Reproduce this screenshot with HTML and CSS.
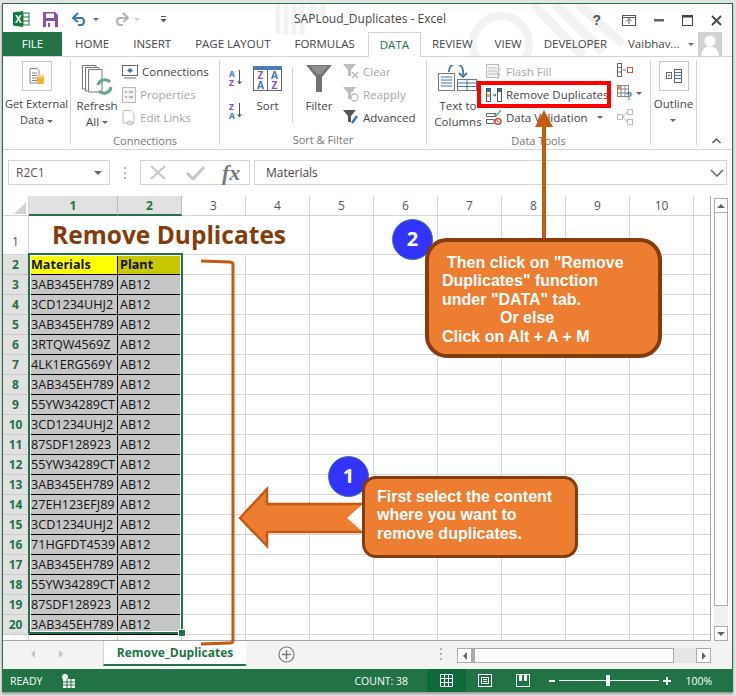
FILE: index.html
```html
<!DOCTYPE html>
<html lang="en">
<head>
    <meta charset="UTF-8">
    <title>SAPLoud_Duplicates - Excel</title>
    <link rel="stylesheet" href="styles.css">
</head>
<body>
<div class="window">
    <div class="titlebar">
        <svg class="watermark" width="730" height="52" viewBox="0 0 730 52">
            <g fill="none" stroke="#f2f2f2">
                <path d="M275 0V30M283 0V30M291 0V30M299 0V30M310 0V14M320 0V14" stroke-width="5"/>
                <circle cx="498" cy="40" r="28" stroke-width="8"/>
                <path d="M530 0L580 52M552 0L600 48M575 0L620 40" stroke-width="9"/>
            </g>
        </svg>
        <div class="quick">
            <svg class="qa xl" width="17" height="16" viewBox="0 0 17 16"><rect x="7" y="2" width="9" height="12" fill="#fff" stroke="#217346"/><path d="M10 2V14M7 6H16M7 10H16" stroke="#217346"/><path d="M0 1.500L10 0V16L0 14.500Z" fill="#107c41"/><text x="2" y="12" class="xl-x">X</text></svg>
            <svg class="qa save" width="15" height="15" viewBox="0 0 15 15"><path d="M0 0H12L15 3V15H0Z" fill="#8a4fa8"/><rect x="3" y="1.500" width="8" height="4.500" fill="#fff"/><rect x="3" y="9" width="9" height="6" fill="#fff"/><rect x="5" y="11" width="2" height="4" fill="#8a4fa8"/></svg>
            <svg class="qa undo" width="16" height="14" viewBox="0 0 16 14"><path d="M2 6H10A4 4 0 0 1 10 13H6" fill="none" stroke="#3c78b4" stroke-width="2.200"/><path d="M6 1L1 6L6 10" fill="none" stroke="#3c78b4" stroke-width="2.200"/></svg>
            <span class="caret qa-caret"></span>
            <svg class="qa redo" width="16" height="14" viewBox="0 0 16 14"><path d="M14 6H6A4 4 0 0 0 6 13H10" fill="none" stroke="#b4b4b4" stroke-width="2.200"/><path d="M10 1L15 6L10 10" fill="none" stroke="#b4b4b4" stroke-width="2.200"/></svg>
            <span class="caret qa-caret light"></span>
            <svg class="qa more" width="7" height="7" viewBox="0 0 7 7"><path d="M1 .500H6" stroke="#555"/><path d="M.500 3H6.500L3.500 6.500Z" fill="#555"/></svg>
        </div>
        <div class="doc-title">SAPLoud_Duplicates - Excel</div>
        <div class="controls">
            <span class="help">?</span>
            <svg width="14" height="11" viewBox="0 0 14 11"><rect x=".500" y=".500" width="13" height="10" fill="none" stroke="#555"/><path d="M.500 2.500H13.500" stroke="#555"/><path d="M7 9V4M4.500 6L7 3.500L9.500 6" fill="none" stroke="#555"/></svg>
            <svg width="10" height="3" viewBox="0 0 10 3"><rect width="10" height="2.500" fill="#666"/></svg>
            <svg width="11" height="11" viewBox="0 0 11 11"><rect x=".500" y=".500" width="10" height="10" fill="none" stroke="#444"/><rect width="11" height="2.500" fill="#444"/></svg>
            <svg width="11" height="11" viewBox="0 0 11 11"><path d="M1 1L10 10M10 1L1 10" stroke="#444" stroke-width="1.800"/></svg>
        </div>
    </div>

    <div class="tabs">
        <div class="tab file">FILE</div>
        <div class="tab home">HOME</div>
        <div class="tab">INSERT</div>
        <div class="tab">PAGE LAYOUT</div>
        <div class="tab">FORMULAS</div>
        <div class="tab active">DATA</div>
        <div class="tab after">REVIEW</div>
        <div class="tab after">VIEW</div>
        <div class="tab after">DEVELOPER</div>
        <div class="user">Vaibhav... <span class="caret"></span></div>
        <svg class="avatar" width="24" height="24" viewBox="0 0 24 24"><rect width="24" height="24" fill="#d2d2d2"/><circle cx="12" cy="9" r="5.500" fill="#fff"/><path d="M3 24C4 16 8 14.500 12 14.500S20 16 21 24Z" fill="#fff"/></svg>
    </div>

    <div class="ribbon">
        <div class="group g-external">
            <div class="big">
                <div class="icon-box">
                    <svg width="16" height="17" viewBox="0 0 16 17"><path d="M1 .500H8L10 2.500V15H1Z" fill="#fff" stroke="#888"/><path d="M3 5H8M3 7.500H8M3 10H8M3 12.500H8" stroke="#888"/><rect x="8" y="7" width="7" height="9" rx="2" fill="#f2b233"/><ellipse cx="11.500" cy="8" rx="3.500" ry="1.500" fill="#f8d88a"/></svg>
                </div>
                <div class="big-label">Get External<br>Data <span class="caret"></span></div>
            </div>
        </div>

        <div class="group g-connections">
            <div class="group-body">
                <div class="big refresh">
                    <svg width="31" height="31" viewBox="0 0 31 31"><g fill="#fff" stroke="#777"><path d="M.500 .500H14V24H.500Z"/><path d="M3.500 2.500H17V26H3.500Z"/><path d="M6.500 4.500H20V27H6.500Z"/></g><path d="M16 20A7 7 0 0 1 28 17M29 22A7 7 0 0 1 17 26" fill="none" stroke="#5fa88a" stroke-width="3"/></svg>
                    <div class="big-label">Refresh<br>All <span class="caret"></span></div>
                </div>
                <ul class="rows">
                    <li><svg width="16" height="14" viewBox="0 0 16 14"><rect x=".500" y=".500" width="15" height="10" fill="#fff" stroke="#666"/><path d="M8 3L11 5.500L8 8L5 5.500Z" fill="#3c78b4"/><path d="M2 13H14" stroke="#666"/></svg>Connections</li>
                    <li class="off"><svg width="14" height="16" viewBox="0 0 14 16"><rect x=".500" y=".500" width="13" height="15" fill="#f4f2f4" stroke="#bbb"/><path d="M3 5H5M7 5H11M3 10H5M7 10H11" stroke="#a9a0a9" stroke-width="1.500"/></svg>Properties</li>
                    <li class="off"><svg width="14" height="16" viewBox="0 0 14 16"><path d="M1 .500H9L12 3.500V13H1Z" fill="#fff" stroke="#bbb"/><ellipse cx="8" cy="13" rx="3" ry="2" fill="none" stroke="#bbb"/></svg>Edit Links</li>
                </ul>
            </div>
            <div class="group-label">Connections</div>
        </div>

        <div class="group g-sort">
            <div class="group-body">
                <div class="sort-arrows">
                    <div class="az"><span class="az-text"><i class="blue">A</i><i class="purple">Z</i></span><svg width="5" height="15" viewBox="0 0 5 15"><path d="M2.500 0V14M.500 11L2.500 14L4.500 11" fill="none" stroke="#555"/></svg></div>
                    <div class="az"><span class="az-text"><i class="purple">Z</i><i class="blue">A</i></span><svg width="5" height="15" viewBox="0 0 5 15"><path d="M2.500 0V14M.500 11L2.500 14L4.500 11" fill="none" stroke="#555"/></svg></div>
                </div>
                <div class="big sort">
                    <div class="za-icon">
                        <span><i class="purple">Z</i><i class="blue">A</i></span>
                        <span><i class="blue">A</i><i class="purple">Z</i></span>
                    </div>
                    <div class="big-label">Sort</div>
                </div>
                <div class="thin-sep"></div>
                <div class="big filter">
                    <svg width="26" height="27" viewBox="0 0 26 27"><path d="M0 0H26L16 12V27H10V12Z" fill="#737373"/><path d="M4 1H22L15 9H11Z" fill="#8f8f8f"/></svg>
                    <div class="big-label">Filter</div>
                </div>
                <ul class="rows filter-rows">
                    <li class="off"><svg width="16" height="15" viewBox="0 0 16 15"><path d="M0 0H13L8 6V12H5V6Z" fill="#bdbdbd"/><path d="M9 8L15 14M15 8L9 14" stroke="#bdbdbd" stroke-width="1.500"/></svg>Clear</li>
                    <li class="off"><svg width="16" height="15" viewBox="0 0 16 15"><path d="M0 0H13L8 6V12H5V6Z" fill="#bdbdbd"/><circle cx="11.500" cy="10.500" r="3.500" fill="none" stroke="#bdbdbd" stroke-width="1.300"/></svg>Reapply</li>
                    <li><svg width="16" height="15" viewBox="0 0 16 15"><path d="M0 0H13L8 6V12H5V6Z" fill="#555"/><path d="M9 13L14 6" stroke="#3c78b4" stroke-width="2.500"/></svg>Advanced</li>
                </ul>
            </div>
            <div class="group-label">Sort &amp; Filter</div>
        </div>

        <div class="group g-tools">
            <div class="group-body">
                <div class="big columns">
                    <svg width="40" height="26" viewBox="0 0 40 26"><rect x=".500" y="8.500" width="16" height="17" fill="#fff" stroke="#777"/><path d="M3 12H14M3 15H14M3 18H14M3 21H14" stroke="#3c78b4"/><rect x="19.500" y="14.500" width="19" height="11" fill="#fff" stroke="#777"/><path d="M19.500 18H38.500M19.500 21.500H38.500M29 14.500V25.500" stroke="#3c78b4"/><path d="M11 7A7 7 0 0 1 25 5V10" fill="none" stroke="#3c78b4" stroke-width="1.800"/><path d="M21 8L25 12L29 8" fill="none" stroke="#3c78b4" stroke-width="1.800"/></svg>
                    <div class="big-label">Text to<br>Columns</div>
                </div>
                <ul class="rows tool-rows">
                    <li class="off"><svg width="16" height="15" viewBox="0 0 16 15"><rect x=".500" y=".500" width="12" height="13" fill="#f4f4f4" stroke="#bbb"/><path d="M2 4H11M2 7H11M2 10H11" stroke="#bbb"/><path d="M15 4L11 10H14L12 15" fill="none" stroke="#bbb"/></svg>Flash Fill</li>
                    <li><svg width="16" height="14" viewBox="0 0 16 14"><rect x=".500" y=".500" width="4" height="13" fill="#fff" stroke="#555"/><rect x="1" y="1" width="3" height="3" fill="#2f6fb0"/><rect x="1" y="6" width="3" height="3" fill="#e2b04a"/><rect x="11.500" y=".500" width="4" height="13" fill="#fff" stroke="#555"/><rect x="12" y="1" width="3" height="3" fill="#2f6fb0"/><path d="M6.500 7H9.500" stroke="#3c78b4"/><path d="M8.500 5.500L10 7L8.500 8.500" fill="none" stroke="#3c78b4"/></svg>Remove Duplicates</li>
                    <li><svg width="16" height="15" viewBox="0 0 16 15"><path d="M.500 3.500H10M.500 6.500H10V3.500M.500 3.500V6.500M.500 9.500H8V13.500H.500Z" fill="none" stroke="#666"/><path d="M8 4L10 6L15 0" fill="none" stroke="#5fa88a" stroke-width="1.300"/><circle cx="12" cy="11.500" r="3" fill="#fff" stroke="#d8402a" stroke-width="1.300"/><path d="M10 9.500L14 13.500" stroke="#d8402a"/></svg>Data Validation <span class="caret dv-caret"></span></li>
                </ul>
                <div class="tool-icons">
                    <svg width="16" height="14" viewBox="0 0 16 14"><rect x=".500" y=".500" width="4" height="13" fill="#fff" stroke="#666"/><path d="M.500 4.500H4.500M.500 9H4.500" stroke="#666"/><path d="M6 7H9" stroke="#3c78b4"/><rect x="10.500" y="4.500" width="5" height="5" fill="#fff" stroke="#e0562a"/></svg>
                    <div class="what-if"><svg width="16" height="16" viewBox="0 0 16 16"><rect x=".500" y=".500" width="11" height="11" fill="#fff" stroke="#888"/><path d="M.500 4H11.500M.500 8H11.500M4 .500V11.500M8 .500V11.500" stroke="#888"/><rect x="1" y="1" width="3" height="3" fill="#e78b3a"/><text x="9" y="15" class="q-mark">?</text></svg><span class="caret"></span></div>
                    <svg width="16" height="16" viewBox="0 0 16 16"><g fill="#fff" stroke="#bbb"><rect x=".500" y="5.500" width="5" height="5"/><rect x="10.500" y=".500" width="5" height="5"/><rect x="10.500" y="10.500" width="5" height="5"/></g><path d="M6 8L10 3M6 8L10 13" stroke="#bbb"/></svg>
                </div>
            </div>
            <div class="group-label">Data Tools</div>
        </div>

        <div class="group g-outline">
            <div class="big">
                <div class="icon-box">
                    <svg width="16" height="14" viewBox="0 0 16 14"><rect x=".500" y="3.500" width="5" height="6" fill="#fff" stroke="#666"/><path d="M2 6.500H4M3 5.500V7.500" stroke="#666"/><rect x="8.500" y=".500" width="7" height="13" fill="#fff" stroke="#666"/><path d="M8.500 3.500H15.500M8.500 6.500H15.500M8.500 9.500H15.500" stroke="#3c78b4"/></svg>
                </div>
                <div class="big-label">Outline<br><span class="caret"></span></div>
            </div>
        </div>
        <svg class="collapse" width="9" height="6" viewBox="0 0 9 6"><path d="M.500 5L4.500 1L8.500 5" fill="none" stroke="#555" stroke-width="1.500"/></svg>
    </div>

    <div class="formula-bar">
        <div class="name-box">R2C1<span class="caret"></span></div>
        <div class="grip"></div>
        <div class="fx-box">
            <svg width="16" height="15" viewBox="0 0 16 15"><path d="M1 1L15 14M15 1L1 14" stroke="#c6c6c6" stroke-width="2"/></svg>
            <svg width="19" height="15" viewBox="0 0 19 15"><path d="M1 8L7 14L18 2" fill="none" stroke="#c6c6c6" stroke-width="3"/></svg>
            <span class="fx">fx</span>
        </div>
        <div class="formula-input">Materials
            <svg width="14" height="8" viewBox="0 0 14 8"><path d="M1 1L7 7L13 1" fill="none" stroke="#666" stroke-width="1.500"/></svg>
        </div>
    </div>

    <div class="sheet">
        <div class="grid-wrap">
            <table class="grid" id="grid"></table>
            <div class="selection"><span class="handle"></span></div>
        </div>
        <div class="vscroll">
            <div class="sb-btn"><span class="tri up"></span></div>
            <div class="vthumb"></div>
            <div class="vtrack"></div>
            <div class="sb-btn"><span class="tri down"></span></div>
        </div>
    </div>

    <div class="sheet-tabs">
        <div class="nav-arrows"><span class="tri left pale"></span><span class="tri right pale"></span></div>
        <div class="sheet-tab">Remove_Duplicates</div>
        <svg class="add-sheet" width="17" height="17" viewBox="0 0 17 17"><circle cx="8.500" cy="8.500" r="7.500" fill="#fff" stroke="#777" stroke-width="1.200"/><path d="M4 8.500H13M8.500 4V13" stroke="#777" stroke-width="1.500"/></svg>
        <div class="grip tabs-grip"></div>
        <div class="hscroll">
            <div class="sb-btn"><span class="tri left"></span></div>
            <div class="hthumb"></div>
            <div class="htrack"></div>
            <div class="sb-btn"><span class="tri right"></span></div>
        </div>
    </div>

    <div class="statusbar">
        <span class="ready">READY</span>
        <svg class="macro" width="13" height="14" viewBox="0 0 13 14"><circle cx="3" cy="3" r="3" fill="#fff"/><rect x="1" y="5" width="12" height="9" fill="#fff"/><path d="M1 8H13M1 11H13M5 5V14M9 5V14" stroke="#217346"/></svg>
        <span class="count">COUNT: 38</span>
        <div class="views">
            <div class="view on"><svg width="13" height="13" viewBox="0 0 13 13"><path d="M.500 .500H12.500V12.500H.500ZM.500 4.500H12.500M.500 8.500H12.500M4.500 .500V12.500M8.500 .500V12.500" fill="none" stroke="#fff"/></svg></div>
            <div class="view"><svg width="14" height="13" viewBox="0 0 14 13"><rect x=".500" y=".500" width="13" height="12" fill="none" stroke="#fff"/><path d="M3.500 3.500H10.500V9.500H3.500ZM5 5.500H9M5 7.500H9" fill="none" stroke="#fff"/></svg></div>
            <div class="view"><svg width="14" height="13" viewBox="0 0 14 13"><rect x=".500" y=".500" width="13" height="12" fill="none" stroke="#fff"/><path d="M3 0H6V7H3ZM8 0H11V7H8Z" fill="#fff"/></svg></div>
        </div>
        <div class="zoom">
            <span class="zoom-minus"></span>
            <div class="slider"><span class="slider-thumb"></span></div>
            <svg width="8" height="8" viewBox="0 0 8 8"><path d="M0 4H8M4 0V8" stroke="#fff" stroke-width="2"/></svg>
        </div>
        <span class="percent">100%</span>
    </div>
</div>

<!-- annotations drawn on top of the screenshot -->
<svg class="marks" width="736" height="696" viewBox="0 0 736 696">
    <path d="M201 261L230 262Q233 262 233 265V640Q233 643 230 643L201 644" fill="none" stroke="#c55a11" stroke-width="3"/>
    <path d="M544 238V126" stroke="#c55a11" stroke-width="4"/>
    <path d="M544 110L553 127H535Z" fill="#c55a11"/>
    <path d="M240 518L267 489V504H368V532H267V546Z" fill="#ed7d31" stroke="#c55a11" stroke-width="2.500"/>
    <path d="M347 518L364 503V533Z" fill="#fff"/>
</svg>
<div class="red-box"></div>
<div class="badge badge-one">1</div>
<div class="badge badge-two">2</div>
<div class="callout callout-one">First select the content<br>where you want to<br>remove duplicates.</div>
<div class="callout callout-two">
    <span class="indent-a">Then click on "Remove</span><br>Duplicates" function<br>under "DATA" tab.<br><span class="indent-b">Or else</span><br>Click on Alt + A + M
</div>

<script>
    const MATERIALS = ['3AB345EH789', '3CD1234UHJ2', '3AB345EH789', '3RTQW4569Z', '4LK1ERG569Y', '3AB345EH789',
        '55YW34289CT', '3CD1234UHJ2', '87SDF128923', '55YW34289CT', '3AB345EH789', '27EH123EFJ89',
        '3CD1234UHJ2', '71HGFDT4539', '3AB345EH789', '55YW34289CT', '87SDF128923', '3AB345EH789'];
    const COLS = 11;

    let html = '<tr class="head"><th class="corner"><span></span></th>';
    for (let c = 1; c <= COLS; c++) {
        html += '<th class="' + (c <= 2 ? 'picked' : '') + '">' + (c <= 10 ? c : '') + '</th>';
    }
    html += '</tr>';

    for (let r = 1; r <= 21; r++) {
        let cells = '';
        let start = 1;
        if (r == 1) {
            cells = '<td colspan="4" class="title">Remove Duplicates</td>';
            start = 5;
        } else if (r == 2) {
            cells = '<td class="data h1">Materials</td><td class="data h2">Plant</td>';
            start = 3;
        } else if (r <= 20) {
            cells = '<td class="data">' + MATERIALS[r - 3] + '</td><td class="data">AB12</td>';
            start = 3;
        }
        for (let c = start; c <= COLS; c++) cells += '<td></td>';
        html += '<tr class="r' + r + '"><th class="' + (r >= 2 && r <= 20 ? 'picked' : '') + '">' + (r <= 20 ? r : '') + '</th>' + cells + '</tr>';
    }
    document.getElementById('grid').innerHTML = html;
</script>
</body>
</html>
```

FILE: styles.css
```css
* {
    box-sizing: border-box;
}
html, body {
    margin: 0;
    padding: 0;
}
body {
    width: 736px;
    height: 696px;
    position: relative;
    overflow: hidden;
    background-color: #e4e4e4;
    font-family: "Open Sans", "Noto Sans", sans-serif;
    font-size: 11.500px;
    color: #444;
}
.window {
    margin: 3px 0 0 2px;
    width: 731px;
    height: 689px;
    background-color: #fff;
    border: 1px solid #217346;
    border-bottom: none;
    display: flex;
    flex-direction: column;
    box-shadow: 0 2px 2px #999;
}

/* title bar */
.titlebar {
    height: 28px;
    flex: none;
    position: relative;
    display: flex;
    align-items: center;
}
.watermark {
    position: absolute;
    left: 0;
    top: 0;
}
.quick {
    display: flex;
    align-items: center;
    position: relative;
    padding: 2px 0 0 10px;
}
.qa.save {
    margin-left: 13px;
}
.qa.undo {
    margin-left: 14px;
}
.qa-caret {
    margin: 0 0 0 5px;
}
.qa.redo {
    margin-left: 14px;
}
.qa.more {
    margin-left: 20px;
}
.xl-x {
    font: bold 10px "Liberation Sans", sans-serif;
    fill: #fff;
}
.caret {
    display: inline-block;
    width: 0;
    height: 0;
    border: 3px solid transparent;
    border-top: 3px solid #666;
    border-bottom: none;
    vertical-align: middle;
}
.caret.light {
    border-top-color: #ccc;
}
.doc-title {
    position: absolute;
    left: 291px;
    top: 6px;
    font-size: 12px;
    color: #444;
    white-space: nowrap;
}
.controls {
    position: absolute;
    right: 10px;
    top: 8px;
    display: flex;
    align-items: center;
    gap: 18px;
}
.help {
    font: bold 14px "Liberation Sans", sans-serif;
    color: #555;
    margin-right: 3px;
}

/* tabs */
.tabs {
    height: 25px;
    flex: none;
    display: flex;
    position: relative;
    border-bottom: 1px solid #d4d4d4;
    font-size: 11.500px;
}
.tab {
    padding: 4px 12px 0;
    height: 25px;
    white-space: nowrap;
    color: #444;
}
.tab.after {
    padding: 4px 11px 0;
}
.tab.file {
    width: 59px;
    height: 24px;
    padding: 4px 0 0;
    text-align: center;
    background-color: #217346;
    color: #fff;
}
.tab.home {
    margin-left: 1px;
}
.tab.active {
    color: #217346;
    background-color: #fff;
    border: 1px solid #d4d4d4;
    border-bottom: none;
    padding: 4px 11px 0;
    margin-left: 1px;
    z-index: 1;
}
.user {
    position: absolute;
    left: 625px;
    top: 4px;
    white-space: nowrap;
}
.user .caret {
    margin-left: 6px;
}
.avatar {
    position: absolute;
    right: 10px;
    top: 0;
}

/* ribbon */
.ribbon {
    height: 93px;
    flex: none;
    display: flex;
    position: relative;
    border-bottom: 1px solid #d4d4d4;
    padding-top: 3px;
}
.group {
    height: 85px;
    border-right: 1px solid #d4d4d4;
    display: flex;
    flex-direction: column;
    position: relative;
    flex: none;
}
.group-body {
    display: flex;
    height: 73px;
}
.group-label {
    text-align: center;
    color: #777;
    font-size: 11px;
    line-height: 15px;
    margin-top: 3px;
}
.g-external {
    width: 68px;
}
.g-connections {
    width: 149px;
}
.g-sort {
    width: 207px;
}
.g-tools {
    width: 224px;
}
.g-outline {
    width: 46px;
}
.big {
    display: flex;
    flex-direction: column;
    align-items: center;
    flex: none;
}
.big-label {
    text-align: center;
    line-height: 16px;
    white-space: nowrap;
}
.icon-box {
    width: 30px;
    height: 30px;
    border: 1px solid #c6c6c6;
    display: flex;
    align-items: center;
    justify-content: center;
    margin: 1px 0 5px;
}
.g-external .big, .g-outline .big {
    width: 100%;
}
.g-external .big-label {
    font-size: 11px;
}
.refresh {
    width: 44px;
    margin-left: 4px;
    padding-top: 5px;
}
.refresh .big-label {
    margin-top: 2px;
}
.rows {
    list-style: none;
    margin: 0;
    padding: 0;
}
.rows li {
    height: 23px;
    display: flex;
    align-items: center;
    gap: 4px;
    white-space: nowrap;
}
.rows li svg {
    flex: none;
}
.rows .off {
    color: #a6a6a6;
}
.g-connections .rows {
    margin-left: 3px;
}
.sort-arrows {
    width: 32px;
    padding: 1px 0 0 9px;
}
.az {
    display: flex;
    align-items: center;
    gap: 2px;
    height: 33px;
}
.az-text {
    display: flex;
    flex-direction: column;
}
.az-text i, .za-icon i {
    font-style: normal;
    font-size: 8.500px;
    line-height: 9px;
    font-weight: bold;
}
.blue {
    color: #3c78b4;
}
.purple {
    color: #8a4fa8;
}
.sort {
    width: 31px;
    margin-top: 6px;
}
.sort .big-label {
    margin-top: 7px;
}
.za-icon {
    width: 29px;
    height: 25px;
    border: 1px solid #666;
    border-top: 4px solid #4a7ebb;
    display: flex;
}
.za-icon span {
    flex: 1;
    display: flex;
    flex-direction: column;
    align-items: center;
    padding-top: 0;
}
.za-icon span + span {
    border-left: 1px solid #666;
}
.za-icon i {
    font-size: 10px;
    line-height: 10px;
}
.thin-sep {
    width: 1px;
    height: 56px;
    background-color: #d4d4d4;
    margin: 7px 11px 0 9px;
}
.filter {
    width: 30px;
    margin-top: 5px;
}
.filter .big-label {
    margin-top: 6px;
}
.filter-rows {
    margin-left: 9px;
}
.columns {
    width: 50px;
    margin-left: 6px;
    padding-top: 5px;
}
.columns .big-label {
    margin-top: 7px;
}
.tool-rows {
    margin-left: 3px;
    width: 131px;
}
.dv-caret {
    margin-left: 5px;
}
.tool-icons {
    display: flex;
    flex-direction: column;
    gap: 8px;
    padding-top: 3px;
}
.what-if {
    display: flex;
    align-items: center;
    gap: 3px;
}
.q-mark {
    font: bold 10px "Liberation Sans", sans-serif;
    fill: #3c78b4;
}
.collapse {
    position: absolute;
    right: 11px;
    bottom: 5px;
}

/* formula bar */
.formula-bar {
    height: 46px;
    flex: none;
    display: flex;
    align-items: flex-start;
    padding: 10px 5px 0 5px;
    font-size: 12px;
}
.name-box {
    width: 102px;
    height: 25px;
    border: 1px solid #d4d4d4;
    display: flex;
    align-items: center;
    justify-content: space-between;
    padding: 0 7px;
    color: #555;
}
.name-box .caret {
    border-width: 4px;
    border-top-width: 4px;
    border-bottom: none;
}
.grip {
    width: 2px;
    height: 12px;
    margin: 7px 14px 0 14px;
    background: repeating-linear-gradient(#b4b4b4 0 2px, transparent 2px 5px);
}
.fx-box {
    width: 110px;
    height: 25px;
    border: 1px solid #d4d4d4;
    display: flex;
    align-items: center;
    padding-left: 9px;
}
.fx-box svg + svg {
    margin-left: 20px;
}
.fx {
    font: italic bold 22px "Liberation Serif", serif;
    color: #777;
    margin-left: 17px;
}
.formula-input {
    flex: 1;
    height: 25px;
    margin-left: 4px;
    border: 1px solid #d4d4d4;
    display: flex;
    align-items: center;
    justify-content: space-between;
    padding: 0 2px 0 11px;
    color: #444;
}

/* sheet */
.sheet {
    height: 445px;
    flex: none;
    display: flex;
    position: relative;
}
.grid-wrap {
    width: 708px;
    height: 445px;
    position: relative;
    overflow: hidden;
    border-right: 1px solid #a6a6a6;
    border-bottom: 1px solid #a6a6a6;
}
.grid {
    border-collapse: separate;
    border-spacing: 0;
    table-layout: fixed;
    width: 708px;
    font-size: 12px;
}
.grid th {
    width: 25px;
    font-weight: normal;
    color: #555;
    padding: 0;
    height: 20px;
    background-color: #fff;
    border-right: 1px solid #d4d4d4;
    border-bottom: 1px solid #d4d4d4;
}
.grid td {
    height: 20px;
    padding: 0 0 0 2px;
    border-right: 1px solid #d4d4d4;
    border-bottom: 1px solid #d4d4d4;
    white-space: nowrap;
    overflow: hidden;
    color: #111;
}
.grid .head th {
    width: 64px;
    font-size: 12px;
}
.grid .head th:nth-child(1) {
    width: 26px;
}
.grid .head th:nth-child(2) {
    width: 89px;
}
.grid .head th:nth-child(12) {
    width: auto;
}
.grid .picked {
    background-color: #e1e1e1;
    color: #217346;
    font-weight: bold;
    border-right-color: #bbb;
    border-bottom-color: #ccc;
}
.grid .head .picked {
    border-bottom: 2px solid #217346;
}
.corner span {
    display: block;
    width: 0;
    height: 0;
    margin: 4px 0 0 11px;
    border-left: 12px solid transparent;
    border-bottom: 12px solid #d4d4d4;
}
.grid .r1 th {
    height: 39px;
    vertical-align: bottom;
    padding-bottom: 4px;
}
.grid .r1 td {
    height: 39px;
}
.grid .title {
    font-family: "Open Sans", sans-serif;
    font-size: 24.500px;
    font-weight: bold;
    color: #843c0c;
    padding-left: 23px;
    line-height: 30px;
}
.grid .data {
    background-color: #c6c6c6;
    border-right-color: #000;
    border-bottom-color: #000;
    font-size: 12.600px;
}
.grid .h1 {
    background-color: #ffff00;
    font-weight: bold;
}
.grid .h2 {
    background-color: #c8c800;
    font-weight: bold;
}
.selection {
    position: absolute;
    left: 25px;
    top: 57px;
    width: 155px;
    height: 381px;
    border: 2px solid #217346;
    outline: 1px solid #fff;
    outline-offset: -3px;
}
.handle {
    position: absolute;
    right: -4px;
    bottom: -4px;
    width: 6px;
    height: 6px;
    background-color: #217346;
    border: 1px solid #fff;
    box-sizing: content-box;
    margin: -1px;
}
.vscroll {
    margin-left: 3px;
    width: 14px;
    height: 445px;
    padding-top: 2px;
    display: flex;
    flex-direction: column;
}
.sb-btn {
    width: 15px;
    height: 15px;
    flex: none;
    border: 1px solid #ababab;
    background-color: #fff;
    display: flex;
    align-items: center;
    justify-content: center;
}
.vscroll .sb-btn {
    width: 14px;
}
.vthumb {
    height: 393px;
    flex: none;
    background-color: #fff;
    border: 1px solid #ababab;
    border-top: none;
}
.vtrack {
    flex: 1;
    background-color: #f0f0f0;
}
.tri {
    display: block;
    width: 0;
    height: 0;
    border: 4px solid transparent;
}
.tri.up {
    border-top: none;
    border-bottom-color: #666;
}
.tri.down {
    border-bottom: none;
    border-top-color: #666;
}
.tri.left {
    border-left: none;
    border-right-color: #666;
}
.tri.right {
    border-right: none;
    border-left-color: #666;
}
.tri.pale.left {
    border-right-color: #c6c6c6;
}
.tri.pale.right {
    border-left-color: #c6c6c6;
}

/* sheet tabs */
.sheet-tabs {
    height: 28px;
    flex: none;
    display: flex;
    background-color: #f3f3f3;
    position: relative;
}
.nav-arrows {
    width: 100px;
    display: flex;
    align-items: center;
    gap: 24px;
    padding-left: 28px;
    height: 26px;
}
.sheet-tab {
    width: 143px;
    height: 25px;
    background-color: #fff;
    border-left: 1px solid #d4d4d4;
    border-bottom: 2px solid #217346;
    text-align: center;
    color: #217346;
    font-weight: bold;
    font-size: 12px;
    line-height: 23px;
}
.add-sheet {
    margin: 5px 0 0 32px;
}
.tabs-grip {
    margin: 7px 0 0 145px;
}
.hscroll {
    display: flex;
    margin: 7px 0 0 15px;
    height: 15px;
}
.hthumb {
    width: 202px;
    background-color: #fff;
    border: 1px solid #ababab;
    border-left-width: 3px;
    border-right-color: #ababab;
}
.htrack {
    width: 22px;
    background-color: #e6e6e6;
}

/* status bar */
.statusbar {
    height: 23px;
    flex: none;
    background-color: #217346;
    color: #fff;
    position: relative;
    display: flex;
    align-items: center;
    font-size: 10.500px;
    padding-left: 7px;
}
.macro {
    margin-left: 20px;
}
.count {
    margin-left: 279px;
}
.views {
    display: flex;
    margin-left: 19px;
}
.view {
    width: 38.500px;
    height: 23px;
    display: flex;
    align-items: center;
    justify-content: center;
}
.view.on {
    background-color: #0e6a38;
}
.zoom {
    display: flex;
    align-items: center;
    margin-left: 6px;
    gap: 4px;
}
.zoom-minus {
    width: 6px;
    height: 2px;
    background-color: #fff;
}
.slider {
    width: 100px;
    height: 1px;
    background-color: #fff;
    position: relative;
}
.slider-thumb {
    position: absolute;
    left: 47px;
    top: -5px;
    width: 4px;
    height: 11px;
    background-color: #fff;
}
.percent {
    margin-left: 15px;
}

/* annotations */
.marks {
    position: absolute;
    left: 0;
    top: 0;
}
.red-box {
    position: absolute;
    left: 477px;
    top: 81px;
    width: 134px;
    height: 27px;
    border: 4px solid #f00;
}
.badge {
    position: absolute;
    width: 41px;
    height: 41px;
    border-radius: 50%;
    background-color: #3333ff;
    border: 1px solid #4472a4;
    color: #fff;
    font-family: "Open Sans", sans-serif;
    font-size: 20px;
    font-weight: bold;
    text-align: center;
    line-height: 38px;
}
.badge-one {
    left: 328px;
    top: 456px;
}
.badge-two {
    left: 392px;
    top: 219px;
}
.callout {
    position: absolute;
    background-color: #ed7d31;
    border: 3px solid #843c0c;
    color: #fff;
    font-family: "Liberation Sans", sans-serif;
    font-size: 16px;
    font-weight: bold;
    line-height: 18.400px;
    white-space: nowrap;
}
.callout-one {
    left: 362px;
    top: 476px;
    width: 216px;
    height: 82px;
    border-radius: 14px;
    padding: 9px 0 0 12px;
}
.callout-two {
    left: 425px;
    top: 238px;
    width: 237px;
    height: 120px;
    border-radius: 22px;
    border-width: 4px;
    padding: 12px 0 0 13px;
}
.indent-a {
    margin-left: 5px;
}
.indent-b {
    margin-left: 58px;
}
```
